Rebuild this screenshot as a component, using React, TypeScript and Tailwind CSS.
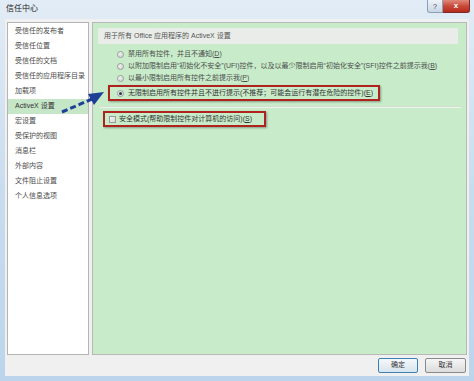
const menuItems = [
  '受信任的发布者',
  '受信任位置',
  '受信任的文档',
  '受信任的应用程序目录',
  '加载项',
  'ActiveX 设置',
  '宏设置',
  '受保护的视图',
  '消息栏',
  '外部内容',
  '文件阻止设置',
  '个人信息选项',
];

function Radio({ checked = false }: { checked?: boolean }) {
  return (
    <span className="flex h-[7px] w-[7px] shrink-0 items-center justify-center rounded-full border border-[#9a9a9a] bg-gradient-to-br from-[#f4f4f4] to-[#d6d6d6]">
      {checked && <span className="h-[3px] w-[3px] rounded-full bg-[#2a3a4a]" />}
    </span>
  );
}

export default function App() {
  return (
    <div className="relative h-[381px] w-[474px] overflow-hidden bg-gradient-to-b from-[#e2ecf6] via-[#c9dcef] to-[#bcd5ec] font-['Liberation_Sans','Noto_Sans_CJK_SC',sans-serif] text-[#4c4c4c]">
      {/* title bar */}
      <div className="flex h-[19px] items-start justify-between pl-[6px] pr-[4px]">
        <span className="mt-[3px] text-[8px] leading-[12px] text-[#222]">信任中心</span>
        <div className="flex">
          <div className="flex h-[13px] w-[16px] items-center justify-center rounded-bl-[3px] border border-t-0 border-[#8aa0b8] bg-gradient-to-b from-[#eef3f8] to-[#c8d6e4] text-[7px] leading-none text-[#445]">
            ?
          </div>
          <div className="flex h-[13px] w-[27px] items-center justify-center rounded-br-[3px] border border-l-0 border-t-0 border-[#7a2a2a] bg-gradient-to-b from-[#e0887a] via-[#c74a3a] to-[#b82a1a] text-[8px] font-bold leading-none text-white">
            x
          </div>
        </div>
      </div>

      {/* client area */}
      <div className="mx-[5px] flex h-[357px] flex-col bg-[#f0f0f0] px-[2px] pt-[3px]">
        <div className="flex h-[333px] gap-[3px]">
          {/* left list */}
          <div className="w-[82px] border border-[#b4b4b4] bg-white pt-[1px] text-[7px]">
            {menuItems.map((item) => (
              <div
                key={item}
                className={
                  item === 'ActiveX 设置'
                    ? 'flex h-[15px] items-center bg-[#c6e6c8] pl-[7px] text-[#333]'
                    : 'flex h-[15px] items-center pl-[7px]'
                }
              >
                {item}
              </div>
            ))}
          </div>

          {/* settings panel */}
          <div className="flex-1 border border-[#b8b8b8] bg-[#c8ecca] text-[7px]">
            <div className="ml-[5px] mr-[8px] mt-[5px] flex h-[16px] items-center bg-[#e9ece9] pl-[6px] text-[#555]">
              用于所有 Office 应用程序的 ActiveX 设置
            </div>

            <div className="mt-[4px] flex flex-col">
              <label className="flex h-[12px] items-center gap-[4px] pl-[24px]">
                <Radio />
                <span>禁用所有控件，并且不通知(<u>D</u>)</span>
              </label>
              <label className="flex h-[12px] items-center gap-[4px] pl-[24px]">
                <Radio />
                <span className="whitespace-nowrap">
                  以附加限制启用“初始化不安全”(UFI)控件，以及以最少限制启用“初始化安全”(SFI)控件之前提示我(<u>B</u>)
                </span>
              </label>
              <label className="flex h-[12px] items-center gap-[4px] pl-[24px]">
                <Radio />
                <span>以最小限制启用所有控件之前提示我(<u>P</u>)</span>
              </label>
              <div className="ml-[15px] mt-[1px] flex h-[16px] w-[272px] items-center gap-[4px] border-2 border-[#b0221e] pl-[7px] shadow-[1px_1px_2px_rgba(0,0,0,0.35)]">
                <Radio checked />
                <span className="whitespace-nowrap text-[#333]">
                  无限制启用所有控件并且不进行提示(不推荐；可能会运行有潜在危险的控件)(<u>E</u>)
                </span>
              </div>
            </div>

            <div className="ml-[7px] mr-[5px] mt-[5px] h-[2px] border-t border-b border-t-[#d4dcd4] border-b-[#eaf6ea]" />

            <div className="ml-[10px] mt-[3px] flex h-[16px] w-[163px] items-center gap-[3px] border-2 border-[#b0221e] pl-[4px] shadow-[1px_1px_2px_rgba(0,0,0,0.35)]">
              <span className="h-[7px] w-[7px] shrink-0 border border-[#9a9a9a] bg-gradient-to-br from-[#f4f4f4] to-[#d8d8d8]" />
              <span className="whitespace-nowrap text-[#333]">
                安全模式(帮助限制控件对计算机的访问)(<u>S</u>)
              </span>
            </div>
          </div>
        </div>

        {/* buttons */}
        <div className="mt-[3px] flex justify-end gap-[7px] pr-[1px] text-[7px]">
          <button className="flex h-[15px] w-[40px] items-center justify-center rounded-[2px] border border-[#3c80b4] bg-gradient-to-b from-[#f4f8fb] to-[#d8e4ee] text-[#333]">
            确定
          </button>
          <button className="flex h-[15px] w-[41px] items-center justify-center rounded-[2px] border border-[#8a8a8a] bg-gradient-to-b from-[#f6f6f6] to-[#dcdcdc] text-[#333]">
            取消
          </button>
        </div>
      </div>

      {/* dashed arrow overlay */}
      <svg className="absolute left-[58px] top-[88px]" width="50" height="30" viewBox="0 0 50 30">
        <line x1="4" y1="24" x2="34" y2="11" stroke="#1d3f96" strokeWidth="3" strokeDasharray="6 3" />
        <polygon points="46,4 30,6 36,17" fill="#1d3f96" />
      </svg>
    </div>
  );
}
